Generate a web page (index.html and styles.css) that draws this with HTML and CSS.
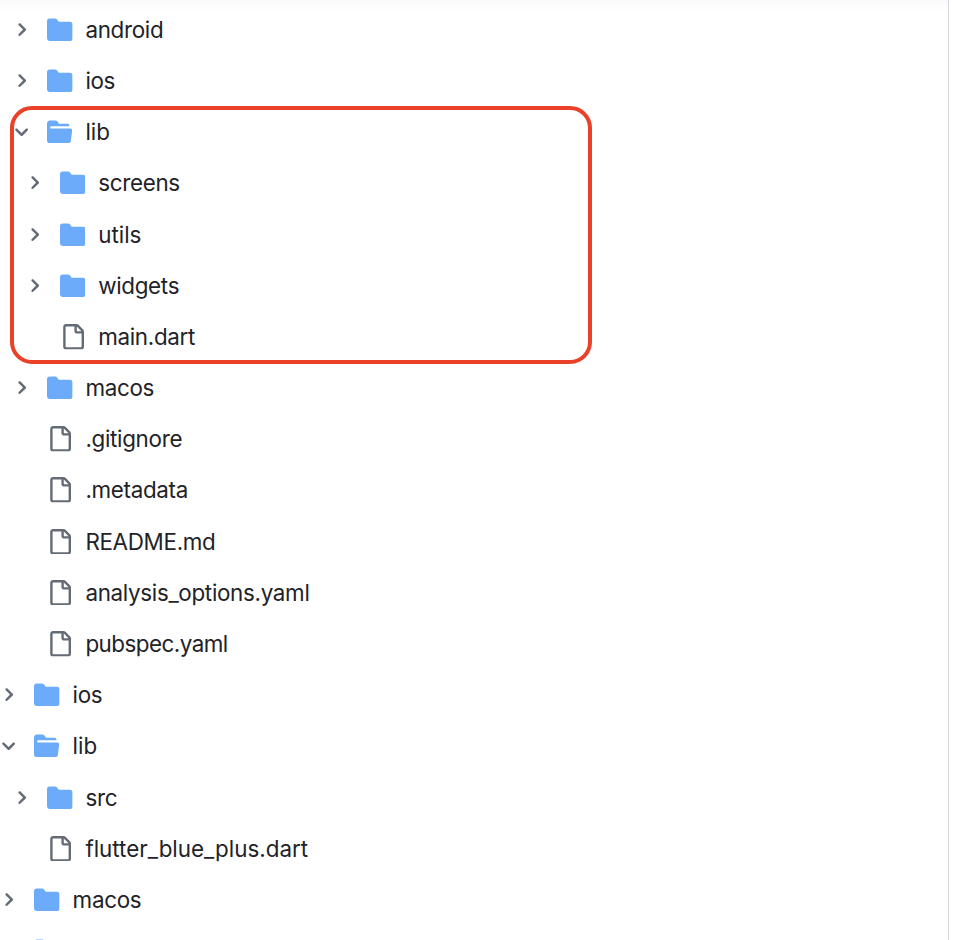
FILE: index.html
```
<!DOCTYPE html>
<html lang="en">
<head>
  <meta charset="UTF-8">
  <title>Files</title>
  <link rel="stylesheet" href="styles.css">
</head>
<body>

  <svg class="sprite" width="0" height="0">
    <symbol id="right" viewBox="0 0 12 12"><path d="M4.7 10c-.2 0-.4-.1-.5-.2-.3-.3-.3-.8 0-1.1L6.9 6 4.2 3.3c-.3-.3-.3-.8 0-1.1.3-.3.8-.3 1.1 0l3.3 3.2c.3.3.3.8 0 1.1L5.3 9.7c-.2.2-.4.3-.6.3Z"/></symbol>
    <symbol id="down" viewBox="0 0 12 12"><path d="M6 8.825c-.2 0-.4-.1-.5-.2l-3.3-3.3c-.3-.3-.3-.8 0-1.1.3-.3.8-.3 1.1 0l2.7 2.7 2.7-2.7c.3-.3.8-.3 1.1 0 .3.3.3.8 0 1.1l-3.2 3.2c-.2.2-.4.3-.6.3Z"/></symbol>
    <symbol id="folder" viewBox="0 0 16 16"><path d="M1.75 1A1.75 1.75 0 0 0 0 2.75v10.5C0 14.216.784 15 1.75 15h12.5A1.75 1.75 0 0 0 16 13.25v-8.5A1.75 1.75 0 0 0 14.25 3H7.5a.25.25 0 0 1-.2-.1l-.9-1.2C6.07 1.26 5.55 1 5 1H1.75Z"/></symbol>
    <symbol id="folder-open" viewBox="0 0 16 16"><path d="M.513 1.513A1.75 1.75 0 0 1 1.75 1h3.5c.55 0 1.07.26 1.4.7l.9 1.2a.25.25 0 0 0 .2.1H13a1 1 0 0 1 1 1v.5H2.75a.75.75 0 0 0 0 1.5h11.978a1 1 0 0 1 .994 1.117L15 13.25A1.75 1.75 0 0 1 13.25 15H1.75A1.75 1.75 0 0 1 0 13.25V2.75c0-.464.184-.91.513-1.237Z"/></symbol>
    <symbol id="file" viewBox="0 0 16 16"><path d="M2 1.75C2 .784 2.784 0 3.75 0h6.586c.464 0 .909.184 1.237.513l2.914 2.914c.329.328.513.773.513 1.237v9.586A1.75 1.75 0 0 1 13.25 16h-9.5A1.75 1.75 0 0 1 2 14.25Zm1.75-.25a.25.25 0 0 0-.25.25v12.5c0 .138.112.25.25.25h9.5a.25.25 0 0 0 .25-.25V6h-2.75A1.75 1.75 0 0 1 9 4.25V1.5Zm6.75.062V4.25c0 .138.112.25.25.25h2.688l-.011-.013-2.914-2.914-.013-.011Z"/></symbol>
  </svg>

  <div class="sidebar">
    <ul class="tree">
      <li>
        <ul>
          <li class="row"><svg class="chevron"><use href="#right"/></svg><svg class="folder"><use href="#folder"/></svg><span>android</span></li>
          <li class="row"><svg class="chevron"><use href="#right"/></svg><svg class="folder"><use href="#folder"/></svg><span>ios</span></li>
          <li class="row"><svg class="chevron"><use href="#down"/></svg><svg class="folder"><use href="#folder-open"/></svg><span class="wide">lib</span></li>
          <li>
            <ul>
              <li class="row"><svg class="chevron"><use href="#right"/></svg><svg class="folder"><use href="#folder"/></svg><span>screens</span></li>
              <li class="row"><svg class="chevron"><use href="#right"/></svg><svg class="folder"><use href="#folder"/></svg><span class="wide">utils</span></li>
              <li class="row"><svg class="chevron"><use href="#right"/></svg><svg class="folder"><use href="#folder"/></svg><span>widgets</span></li>
              <li class="row"><svg class="chevron"></svg><svg class="file"><use href="#file"/></svg><span>main.dart</span></li>
            </ul>
          </li>
          <li class="row"><svg class="chevron"><use href="#right"/></svg><svg class="folder"><use href="#folder"/></svg><span>macos</span></li>
          <li class="row"><svg class="chevron"></svg><svg class="file"><use href="#file"/></svg><span>.gitignore</span></li>
          <li class="row"><svg class="chevron"></svg><svg class="file"><use href="#file"/></svg><span>.metadata</span></li>
          <li class="row"><svg class="chevron"></svg><svg class="file"><use href="#file"/></svg><span>README.md</span></li>
          <li class="row"><svg class="chevron"></svg><svg class="file"><use href="#file"/></svg><span>analysis_options.yaml</span></li>
          <li class="row"><svg class="chevron"></svg><svg class="file"><use href="#file"/></svg><span class="tight">pubspec.yaml</span></li>
        </ul>
      </li>
      <li class="row"><svg class="chevron"><use href="#right"/></svg><svg class="folder"><use href="#folder"/></svg><span>ios</span></li>
      <li class="row"><svg class="chevron"><use href="#down"/></svg><svg class="folder"><use href="#folder-open"/></svg><span class="wide">lib</span></li>
      <li>
        <ul>
          <li class="row"><svg class="chevron"><use href="#right"/></svg><svg class="folder"><use href="#folder"/></svg><span>src</span></li>
          <li class="row"><svg class="chevron"></svg><svg class="file"><use href="#file"/></svg><span class="wide">flutter_blue_plus.dart</span></li>
        </ul>
      </li>
      <li class="row"><svg class="chevron"><use href="#right"/></svg><svg class="folder"><use href="#folder"/></svg><span>macos</span></li>
      <li class="row"><svg class="chevron"></svg><svg class="folder"><use href="#folder"/></svg></li>
    </ul>
    <div class="highlight"></div>
  </div>

</body>
</html>
```

FILE: styles.css
```
body {
  margin: 0;
  height: 940px;
  overflow: hidden;
  background-color: #fff;
  font-family: Inter, "Liberation Sans", sans-serif;
  font-size: 22.4px;
  letter-spacing: -0.31px;
  color: #1f2328;
}

.sprite {
  display: block;
}

.sidebar {
  position: relative;
  box-sizing: border-box;
  width: 949px;
  height: 940px;
  overflow: hidden;
  border-right: 1px solid #d0d7de;
  background: linear-gradient(#fafafa, #fff 12px);
}

ul {
  list-style: none;
  margin: 0;
  padding: 0;
}

ul ul {
  padding-left: 12.8px;
}

.tree {
  margin-left: -0.8px;
  padding-top: 3.7px;
}

.row {
  display: flex;
  align-items: center;
  height: 51.19px;
  white-space: nowrap;
}

.row svg {
  flex: none;
}

.wide {
  letter-spacing: 0;
}

.tight {
  letter-spacing: -0.52px;
}

.chevron {
  width: 19.2px;
  height: 19.2px;
  margin-top: 0.2px;
  margin-right: 15.8px;
  fill: #636c76;
}

.folder,
.file {
  width: 25.6px;
  height: 25.6px;
  margin-top: 0.6px;
  margin-right: 12.8px;
  fill: #636c76;
}

.folder {
  fill: #6cabf9;
}

/* red frame around the example lib folder */
.highlight {
  position: absolute;
  left: 10px;
  top: 106px;
  box-sizing: border-box;
  width: 582px;
  height: 258px;
  border: 4px solid #eb4128;
  border-radius: 22px;
}
```
